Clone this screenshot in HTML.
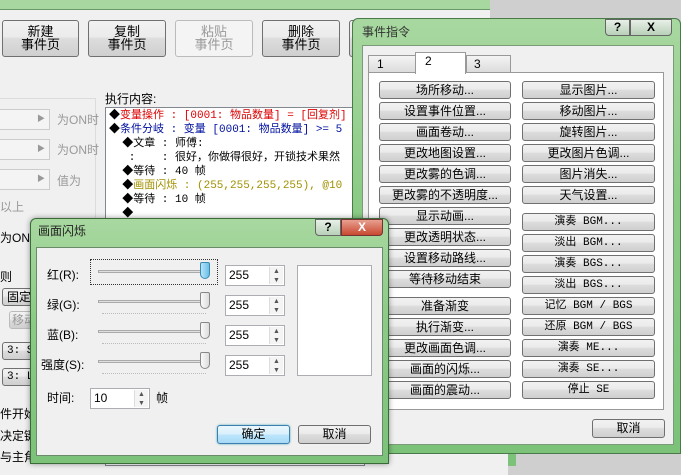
<!DOCTYPE html>
<html><head><meta charset="utf-8"><style>
*{margin:0;padding:0;box-sizing:border-box}
body{width:681px;height:466px;overflow:hidden;position:relative;background:#cfcfcf;font-family:"Liberation Sans","Noto Sans CJK SC",sans-serif;font-size:12px;color:#000}
.a{position:absolute}
.btn{position:absolute;border:1px solid #707070;border-radius:3px;background:linear-gradient(#f2f2f2,#ebebeb 45%,#dddddd 50%,#cfcfcf);text-align:center;font-size:12px;line-height:16px;white-space:nowrap}
.big{line-height:13px;padding-top:4px;font-size:13px}
.green{background:linear-gradient(#a8d8a0,#8ccb86 40%,#7cc279)}
.inp{position:absolute;background:#fff;border:1px solid #abadb3}
.spin{position:absolute;right:1px;width:14px;top:1px;bottom:1px;border-left:1px solid #ddd;font-size:7px;line-height:9px;text-align:center;color:#555;background:#f4f4f4}
.mono{font-family:"Liberation Mono","Noto Sans CJK SC",monospace;font-size:11px}
.list{font-family:"Liberation Mono","Noto Sans CJK SC",monospace;font-size:11px}
.list .c{font-family:"Noto Sans CJK SC",sans-serif;font-size:12px}
</style></head><body>
<div class="a green" style="left:0;top:0;width:516px;height:466px"></div>
<div class="a" style="left:0;top:9px;width:508px;height:466px;background:#f0f0f0;border-top:1px solid #6a9a6a"></div>
<div class="a" style="left:490px;top:0;width:191px;height:18px;background:#cfcfcf"></div>
<div class="btn big" style="left:2px;top:20px;width:77px;height:37px">新建<br>事件页</div>
<div class="btn big" style="left:88px;top:20px;width:78px;height:37px">复制<br>事件页</div>
<div class="btn big" style="left:175px;top:20px;width:78px;height:37px;color:#999;border-color:#bbb;background:#f4f4f4">粘贴<br>事件页</div>
<div class="btn big" style="left:262px;top:20px;width:78px;height:37px">删除<br>事件页</div>
<div class="btn big" style="left:349px;top:20px;width:20px;height:37px"></div>
<div class="a" style="left:0;top:98px;width:96px;height:360px;border:1px solid #dcdcdc;border-left:none"></div>
<div class="inp" style="left:-2px;top:109px;width:52px;height:21px;border-color:#ccc;background:#f4f4f4"><span class="a" style="right:4px;top:3px;font-size:8px;color:#999">▶</span></div>
<div class="inp" style="left:-2px;top:139px;width:52px;height:21px;border-color:#ccc;background:#f4f4f4"><span class="a" style="right:4px;top:3px;font-size:8px;color:#999">▶</span></div>
<div class="inp" style="left:-2px;top:169px;width:52px;height:21px;border-color:#ccc;background:#f4f4f4"><span class="a" style="right:4px;top:3px;font-size:8px;color:#999">▶</span></div>
<div class="a" style="left:57px;top:111px;color:#999">为ON时</div>
<div class="a" style="left:57px;top:141px;color:#999">为ON时</div>
<div class="a" style="left:57px;top:172px;color:#999">值为</div>
<div class="a" style="left:0;top:198px;color:#999">以上</div>
<div class="a" style="left:0;top:229px">为ON</div>
<div class="a" style="left:0;top:268px">则</div>
<div class="btn" style="left:2px;top:288px;width:40px;height:18px;text-align:left;padding-left:4px">固定</div>
<div class="btn" style="left:9px;top:311px;width:30px;height:18px;color:#999;border-color:#bbb">移动</div>
<div class="btn mono" style="left:2px;top:342px;width:40px;height:18px;text-align:left;padding-left:4px">3: S</div>
<div class="btn mono" style="left:2px;top:368px;width:40px;height:18px;text-align:left;padding-left:4px">3: L</div>
<div class="a" style="left:0;top:405px">件开始</div>
<div class="a" style="left:0;top:427px">决定键</div>
<div class="a" style="left:0;top:448px">与主角</div>
<div class="a" style="left:105px;top:90px">执行内容:</div>
<div class="a" style="left:105px;top:107px;width:260px;height:359px;background:#fff;border:1px solid #828790"></div>
<div class="a list" style="left:109px;top:109px;line-height:14px;white-space:nowrap">
<div>◆<span style="color:#d00">变量操作 : [0001: 物品数量] = [回复剂]</span></div>
<div>◆<span style="color:#0010a0">条件分岐 : 变量 [0001: 物品数量] &gt;= 5</span></div>
<div>&nbsp;&nbsp;◆文章 : 师傅:</div>
<div>&nbsp;&nbsp;&nbsp;:&nbsp;&nbsp;&nbsp;&nbsp;: 很好，你做得很好，开锁技术果然</div>
<div>&nbsp;&nbsp;◆等待 : 40 帧</div>
<div>&nbsp;&nbsp;◆<span style="color:#a09000">画面闪烁 : (255,255,255,255), @10</span></div>
<div>&nbsp;&nbsp;◆等待 : 10 帧</div>
<div>&nbsp;&nbsp;◆</div></div>
<div class="a green" style="left:352px;top:18px;width:329px;height:436px;border:1px solid #4a7a4a;border-radius:6px 6px 0 0"></div>
<div class="a" style="left:362px;top:23px;font-size:12px;color:#333">事件指令</div>
<div class="a" style="left:605px;top:19px;width:25px;height:17px;border:1px solid #666;border-radius:0 0 0 4px;background:linear-gradient(#e8f0e8,#b8d0b8);text-align:center;font-weight:bold;line-height:15px">?</div>
<div class="a" style="left:630px;top:19px;width:42px;height:17px;border:1px solid #666;border-radius:0 0 4px 0;background:linear-gradient(#e8f0e8,#b8d0b8);text-align:center;font-weight:bold;line-height:15px">X</div>
<div class="a" style="left:362px;top:45px;width:312px;height:400px;background:#f0f0f0;border:1px solid #7a9a7a"></div>
<div class="a" style="left:368px;top:55px;width:48px;height:18px;border:1px solid #999;background:linear-gradient(#f4f4f4,#dcdcdc);padding-left:8px;line-height:17px">1</div>
<div class="a" style="left:466px;top:55px;width:45px;height:18px;border:1px solid #999;background:linear-gradient(#f4f4f4,#dcdcdc);padding-left:7px;line-height:17px">3</div>
<div class="a" style="left:368px;top:72px;width:296px;height:338px;background:#fff;border:1px solid #999"></div>
<div class="a" style="left:415px;top:52px;width:51px;height:22px;border:1px solid #999;border-bottom:none;background:#fff;padding-left:9px;line-height:17px">2</div>
<div class="btn" style="left:379px;top:81px;width:132px;height:18px">场所移动...</div>
<div class="btn" style="left:379px;top:102px;width:132px;height:18px">设置事件位置...</div>
<div class="btn" style="left:379px;top:123px;width:132px;height:18px">画面卷动...</div>
<div class="btn" style="left:379px;top:144px;width:132px;height:18px">更改地图设置...</div>
<div class="btn" style="left:379px;top:165px;width:132px;height:18px">更改雾的色调...</div>
<div class="btn" style="left:379px;top:186px;width:132px;height:18px">更改雾的不透明度...</div>
<div class="btn" style="left:379px;top:207px;width:132px;height:18px">显示动画...</div>
<div class="btn" style="left:379px;top:228px;width:132px;height:18px">更改透明状态...</div>
<div class="btn" style="left:379px;top:249px;width:132px;height:18px">设置移动路线...</div>
<div class="btn" style="left:379px;top:270px;width:132px;height:18px">等待移动结束</div>
<div class="btn" style="left:379px;top:297px;width:132px;height:18px">准备渐变</div>
<div class="btn" style="left:379px;top:318px;width:132px;height:18px">执行渐变...</div>
<div class="btn" style="left:379px;top:339px;width:132px;height:18px">更改画面色调...</div>
<div class="btn" style="left:379px;top:360px;width:132px;height:18px">画面的闪烁...</div>
<div class="btn" style="left:379px;top:381px;width:132px;height:18px">画面的震动...</div>
<div class="btn" style="left:522px;top:81px;width:133px;height:18px">显示图片...</div>
<div class="btn" style="left:522px;top:102px;width:133px;height:18px">移动图片...</div>
<div class="btn" style="left:522px;top:123px;width:133px;height:18px">旋转图片...</div>
<div class="btn" style="left:522px;top:144px;width:133px;height:18px">更改图片色调...</div>
<div class="btn" style="left:522px;top:165px;width:133px;height:18px">图片消失...</div>
<div class="btn" style="left:522px;top:186px;width:133px;height:18px">天气设置...</div>
<div class="btn mono" style="left:522px;top:213px;width:133px;height:18px">演奏 BGM...</div>
<div class="btn mono" style="left:522px;top:234px;width:133px;height:18px">淡出 BGM...</div>
<div class="btn mono" style="left:522px;top:255px;width:133px;height:18px">演奏 BGS...</div>
<div class="btn mono" style="left:522px;top:276px;width:133px;height:18px">淡出 BGS...</div>
<div class="btn mono" style="left:522px;top:297px;width:133px;height:18px">记忆 BGM / BGS</div>
<div class="btn mono" style="left:522px;top:318px;width:133px;height:18px">还原 BGM / BGS</div>
<div class="btn mono" style="left:522px;top:339px;width:133px;height:18px">演奏 ME...</div>
<div class="btn mono" style="left:522px;top:360px;width:133px;height:18px">演奏 SE...</div>
<div class="btn mono" style="left:522px;top:381px;width:133px;height:18px">停止 SE</div>
<div class="btn" style="left:592px;top:419px;width:73px;height:19px">取消</div>
<div class="a green" style="left:30px;top:218px;width:359px;height:246px;border:1px solid #3a6a3a;border-radius:6px 6px 0 0;box-shadow:0 0 6px rgba(0,0,0,.4)"></div>
<div class="a" style="left:38px;top:222px;color:#222">画面闪烁</div>
<div class="a" style="left:315px;top:219px;width:26px;height:17px;border:1px solid #666;border-radius:0 0 0 4px;background:linear-gradient(#e8f0e8,#b8d0b8);text-align:center;font-weight:bold;line-height:15px">?</div>
<div class="a" style="left:341px;top:219px;width:42px;height:17px;border:1px solid #733;border-radius:0 0 4px 0;background:linear-gradient(#e8a090,#c84830);color:#fff;text-align:center;font-weight:bold;line-height:15px">X</div>
<div class="a" style="left:36px;top:247px;width:347px;height:209px;background:#f0f0f0;border:1px solid #6a8a6a"></div>
<div class="a" style="left:47px;top:266px">红(R):</div>
<div class="a" style="left:47px;top:296px">绿(G):</div>
<div class="a" style="left:47px;top:326px">蓝(B):</div>
<div class="a" style="left:41px;top:356px">强度(S):</div>
<div class="a" style="left:90px;top:259px;width:128px;height:26px;border:1px dotted #333"></div>
<div class="a" style="left:98px;top:270px;width:108px;height:3px;border:1px solid #aaa;background:#e0e0e0"></div>
<div class="a" style="left:98px;top:300px;width:108px;height:3px;border:1px solid #aaa;background:#e0e0e0"></div>
<div class="a" style="left:98px;top:330px;width:108px;height:3px;border:1px solid #aaa;background:#e0e0e0"></div>
<div class="a" style="left:98px;top:360px;width:108px;height:3px;border:1px solid #aaa;background:#e0e0e0"></div>
<div class="a" style="left:200px;top:262px;width:10px;height:17px;border:1px solid #3a8ab0;border-radius:2px 2px 5px 5px;background:linear-gradient(90deg,#b8e4f8,#6ac0e8)"></div>
<div class="a" style="left:200px;top:292px;width:10px;height:17px;border:1px solid #888;border-radius:2px 2px 5px 5px;background:linear-gradient(90deg,#fafafa,#dcdcdc)"></div>
<div class="a" style="left:200px;top:322px;width:10px;height:17px;border:1px solid #888;border-radius:2px 2px 5px 5px;background:linear-gradient(90deg,#fafafa,#dcdcdc)"></div>
<div class="a" style="left:200px;top:352px;width:10px;height:17px;border:1px solid #888;border-radius:2px 2px 5px 5px;background:linear-gradient(90deg,#fafafa,#dcdcdc)"></div>
<div class="a" style="left:102px;top:313px;width:104px;border-top:1px dotted #bbb"></div>
<div class="a" style="left:102px;top:343px;width:104px;border-top:1px dotted #bbb"></div>
<div class="a" style="left:102px;top:373px;width:104px;border-top:1px dotted #bbb"></div>
<div class="inp" style="left:225px;top:265px;width:60px;height:21px;padding:2px 3px">255<div class="spin">▲<br>▼</div></div>
<div class="inp" style="left:225px;top:295px;width:60px;height:21px;padding:2px 3px">255<div class="spin">▲<br>▼</div></div>
<div class="inp" style="left:225px;top:325px;width:60px;height:21px;padding:2px 3px">255<div class="spin">▲<br>▼</div></div>
<div class="inp" style="left:225px;top:355px;width:60px;height:21px;padding:2px 3px">255<div class="spin">▲<br>▼</div></div>
<div class="inp" style="left:297px;top:265px;width:75px;height:111px"></div>
<div class="a" style="left:47px;top:389px">时间:</div>
<div class="inp" style="left:90px;top:388px;width:60px;height:21px;padding:2px 3px">10<div class="spin">▲<br>▼</div></div>
<div class="a" style="left:156px;top:389px">帧</div>
<div class="btn" style="left:217px;top:425px;width:73px;height:19px;border-color:#3c7fb1;background:linear-gradient(#eaf6fd,#d9f0fc 50%,#bee6fd 50%,#a7d9f5);box-shadow:0 0 2px #5ab">确定</div>
<div class="btn" style="left:298px;top:425px;width:73px;height:19px">取消</div>
</body></html>
